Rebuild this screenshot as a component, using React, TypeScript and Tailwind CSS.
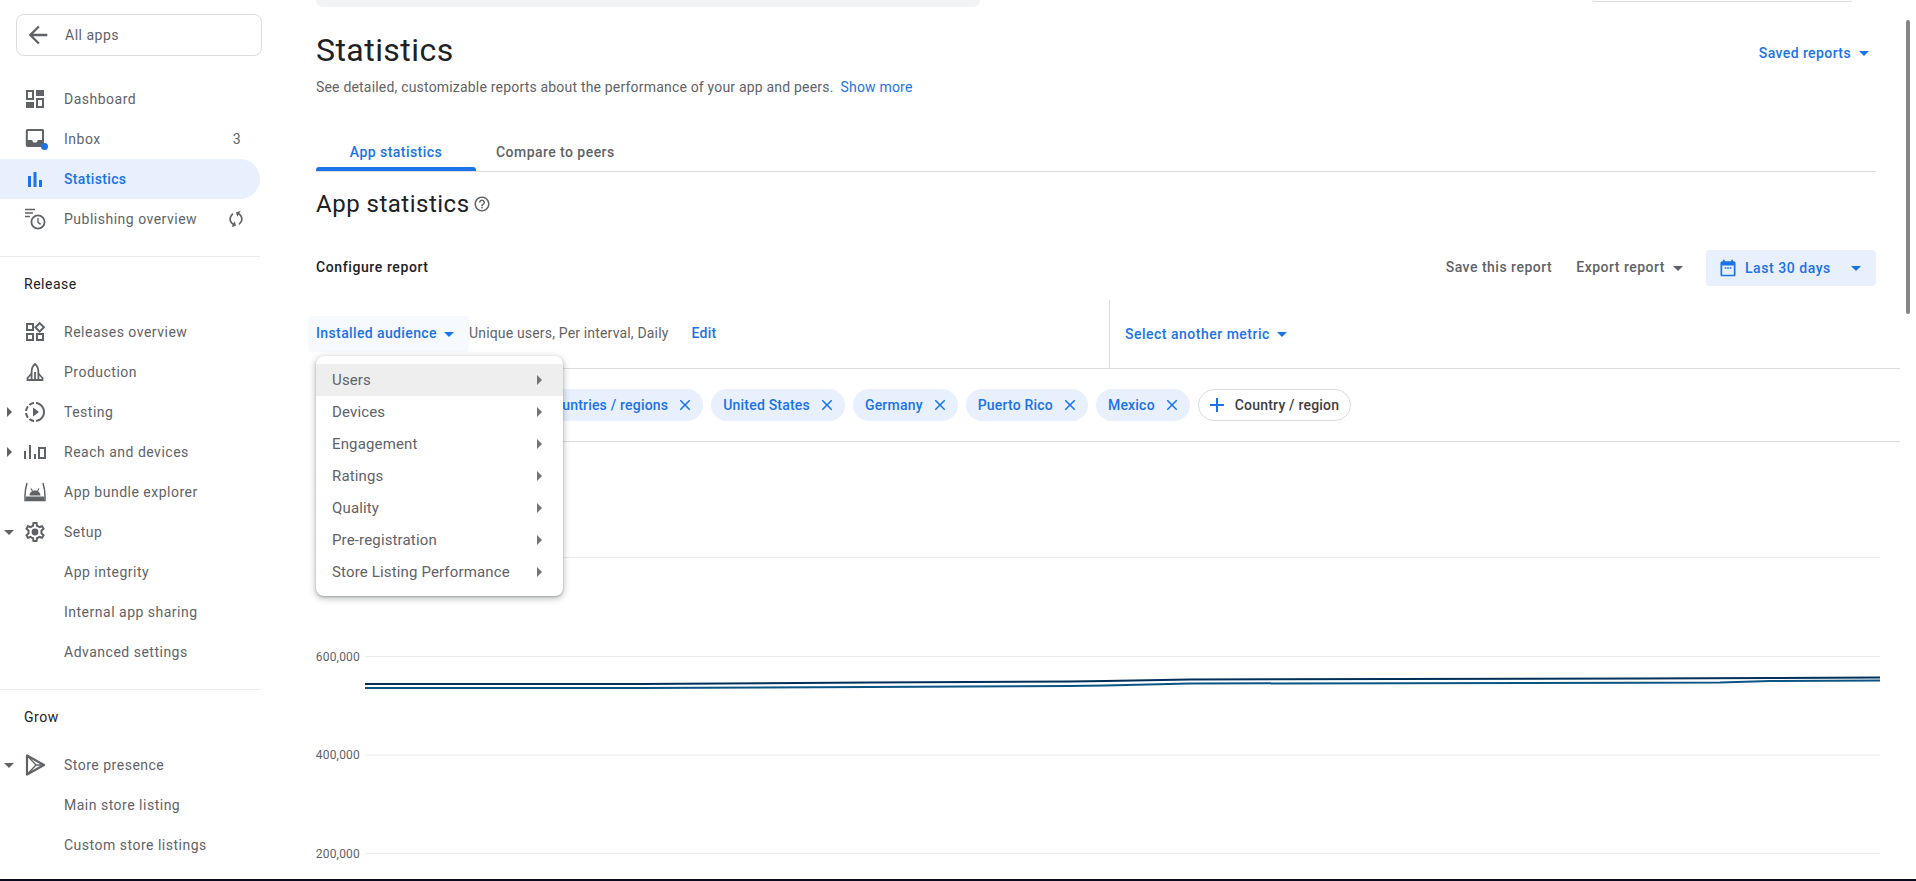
import React from "react";

const P = ({ d, className = "" }: { d: string; className?: string }) => (
  <svg viewBox="0 0 24 24" fill="currentColor" className={className}>
    <path d={d} />
  </svg>
);

const CaretDown = ({ className = "" }: { className?: string }) => (
  <svg viewBox="7 10 10 5" fill="currentColor" className={`w-[10px] h-[5px] shrink-0 ${className}`}>
    <path d="M7 10l5 5 5-5z" />
  </svg>
);
const CaretRight = ({ className = "" }: { className?: string }) => (
  <svg viewBox="0 0 5 10" fill="currentColor" className={`w-[5px] h-[10px] shrink-0 ${className}`}>
    <path d="M0 0l5 5-5 5z" />
  </svg>
);

const cog =
  "M19.43 12.98c.04-.32.07-.64.07-.98 0-.34-.03-.66-.07-.98l2.11-1.65c.19-.15.24-.42.12-.64l-2-3.46c-.09-.16-.26-.25-.44-.25-.06 0-.12.01-.17.03l-2.49 1c-.52-.4-1.08-.73-1.69-.98l-.38-2.65C14.46 2.18 14.25 2 14 2h-4c-.25 0-.46.18-.49.42l-.38 2.65c-.61.25-1.17.59-1.69.98l-2.49-1c-.06-.02-.12-.03-.18-.03-.17 0-.34.09-.43.25l-2 3.46c-.13.22-.07.49.12.64l2.11 1.65c-.04.32-.07.65-.07.98 0 .33.03.66.07.98l-2.11 1.65c-.19.15-.24.42-.12.64l2 3.46c.09.16.26.25.44.25.06 0 .12-.01.17-.03l2.49-1c.52.4 1.08.73 1.69.98l.38 2.65c.03.24.24.42.49.42h4c.25 0 .46-.18.49-.42l.38-2.65c.61-.25 1.17-.59 1.69-.98l2.49 1c.06.02.12.03.18.03.17 0 .34-.09.43-.25l2-3.46c.12-.22.07-.49-.12-.64l-2.11-1.65zm-1.98-1.71c.04.31.05.52.05.73 0 .21-.02.43-.05.73l-.14 1.13.89.7 1.08.84-.7 1.21-1.27-.51-1.04-.42-.9.68c-.43.32-.84.56-1.25.73l-1.06.43-.16 1.13-.2 1.35h-1.4l-.19-1.35-.16-1.13-1.06-.43c-.43-.18-.83-.41-1.23-.71l-.91-.7-1.06.43-1.27.51-.7-1.21 1.08-.84.89-.7-.14-1.13c-.03-.31-.05-.54-.05-.74s.02-.43.05-.73l.14-1.13-.89-.7-1.08-.84.7-1.21 1.27.51 1.04.42.9-.68c.43-.32.84-.56 1.25-.73l1.06-.43.16-1.13.2-1.35h1.39l.19 1.35.16 1.13 1.06.43c.43.18.83.41 1.23.71l.91.7 1.06-.43 1.27-.51.7 1.21-1.07.85-.89.7.14 1.13z";

const I = {
  dashboard: (
    <svg viewBox="0 0 20 20" fill="currentColor" className="w-5 h-5">
      <path fillRule="evenodd" d="M1 1h8v10H1zM3 3v6h4V3z" />
      <path d="M11 1h8v6h-8zM1 13h8v6H1z" />
      <path fillRule="evenodd" d="M11 9h8v10h-8zM13 11v6h4v-6z" />
    </svg>
  ),
  inbox: (
    <span className="relative w-5 h-5 block">
      <svg viewBox="0 0 20 20" fill="currentColor" className="w-5 h-5">
        <path fillRule="evenodd" d="M2.5 0h15A1.8 1.8 0 0 1 19 1.8v14.4a1.8 1.8 0 0 1-1.8 1.8H2.500A1.8 1.8 0 0 1 .8 16.2V1.8A1.8 1.8 0 0 1 2.500 0zM2.800 2v9h4.400c0 1.600 1.200 2.600 2.700 2.600s2.800-1 2.800-2.600h4.300V2z" />
      </svg>
      <span className="absolute -right-[3px] -bottom-[1px] w-[7px] h-[7px] rounded-full bg-[#1a73e8]" />
    </span>
  ),
  stats: <P className="w-[24px] h-[24px] text-[#1a73e8]" d="M5 9h3v11H5zM10.500 5h3v15h-3zM16 13h3v7h-3z" />,
  publishing: (
    <svg viewBox="0 0 22 22" className="w-[22px] h-[22px]" fill="none" stroke="currentColor">
      <path d="M1 1.500h10M1 5h8M1 8.500h5" strokeWidth="1.600" />
      <circle cx="14" cy="14" r="6.600" strokeWidth="1.800" />
      <path d="M14 10v4.400l2.600 2" strokeWidth="1.400" />
    </svg>
  ),
  releases: (
    <P
      className="w-6 h-6"
      d="M16.66 4.52l2.83 2.83-2.83 2.83-2.83-2.83 2.83-2.83M9 5v4H5V5h4m10 10v4h-4v-4h4M9 15v4H5v-4h4m7.66-13.31L11 7.34 16.66 13l5.66-5.66-5.66-5.65zM11 3H3v8h8V3zm10 10h-8v8h8v-8zm-10 0H3v8h8v-8z"
    />
  ),
  production: (
    <svg viewBox="0 0 18 18" className="w-[18px] h-[18px]" fill="none" stroke="currentColor" strokeWidth="1.800">
      <path d="M9 1C6.600 3 5.600 6 5.600 9v8h6.800V9c0-3-1-6-3.400-8z" />
      <path d="M5.600 10.500L1.500 15v2h4.100M12.400 10.500l4.100 4.500v2h-4.100M9 9v8" />
    </svg>
  ),
  testing: (
    <P
      className="w-6 h-6"
      d="M13.05 9.79L10 7.5v9l3.05-2.29L16 12zM11 4.07V2.05c-2.01.2-3.84 1-5.32 2.21L7.1 5.69c1.11-.86 2.44-1.44 3.9-1.62zM5.69 7.1L4.26 5.68C3.05 7.16 2.25 8.99 2.05 11h2.02c.18-1.46.76-2.79 1.62-3.9zM4.07 13H2.05c.2 2.01 1 3.84 2.21 5.32l1.43-1.43c-.86-1.1-1.44-2.43-1.62-3.89zm1.61 6.74C7.16 20.95 9 21.75 11 21.95v-2.02c-1.46-.18-2.79-.76-3.9-1.62l-1.42 1.43zM22 12c0 5.16-3.92 9.42-8.95 9.95v-2.02C16.97 19.41 20 16.05 20 12s-3.03-7.41-6.95-7.93V2.05C18.08 2.58 22 6.84 22 12z"
    />
  ),
  reach: (
    <svg viewBox="0 0 22 14" className="w-[22px] h-[14px]" fill="currentColor">
      <path d="M0 6h2v8H0zM5 0h2v14H5zM10 9h2v5h-2z" />
      <path fillRule="evenodd" d="M14 2h8v12h-8zM16 4v8h4V4z" />
    </svg>
  ),
  bundle: (
    <svg viewBox="0 0 22 20" className="w-[22px] h-[20px]" fill="none" stroke="currentColor">
      <path d="M3 1C1.800 5 1 10 1 14v4.500h20V14c0-4-.8-9-2-13" strokeWidth="1.500" />
      <path d="M5.500 13.500c0-2.800 2.300-5 5.500-5s5.500 2.200 5.500 5z" fill="currentColor" stroke="none" />
      <path d="M2 14.500h18v4.500H2z" fill="currentColor" stroke="none" />
      <path d="M7 6.500l1.500 2.500M15 6.500L13.500 9" strokeWidth="1.200" />
    </svg>
  ),
  setup: (
    <svg viewBox="0 0 24 24" className="w-6 h-6" fill="currentColor">
      <path d={cog} />
      <circle cx="12" cy="12" r="3.400" />
    </svg>
  ),
  store: (
    <svg viewBox="0 0 22 22" className="w-[22px] h-[22px]" fill="none" stroke="currentColor" strokeLinejoin="round">
      <path d="M3 1.500L20 11 3 20.500z" strokeWidth="2.200" />
      <path d="M3 1.500L12 11 3 20.500M12 11l8 0" strokeWidth="1.300" />
    </svg>
  ),
};

const sync =
  "M12 4V1L8 5l4 4V6c3.310 0 6 2.690 6 6 0 1.010-.25 1.970-.7 2.800l1.460 1.460C19.540 15.030 20 13.570 20 12c0-4.420-3.580-8-8-8zm0 14c-3.310 0-6-2.690-6-6 0-1.010.25-1.970.7-2.800L5.240 7.740C4.460 8.970 4 10.430 4 12c0 4.420 3.580 8 8 8v3l4-4-4-4v3z";

type Item = {
  label: string;
  icon?: React.ReactNode;
  caret?: "r" | "d";
  right?: React.ReactNode;
  active?: boolean;
};

const NavRow = ({ label, icon, caret, right, active }: Item) => (
  <div
    className={`h-10 flex items-center text-[14px] tracking-[0.5px] ${
      active ? "bg-[#e8f0fe] text-[#1a73e8] rounded-r-[20px] font-medium !tracking-[0.35px]" : "text-[#5f6368]"
    }`}
  >
    <span className="w-[24px] shrink-0 flex justify-center pr-[6px] text-[#5f6368]">
      {caret === "r" && <CaretRight />}
      {caret === "d" && <CaretDown />}
    </span>
    <span className="w-[40px] shrink-0 flex items-center pr-[16px] justify-center -translate-x-[1px]">{icon}</span>
    <span className="flex-1 whitespace-nowrap">{label}</span>
    {right && <span className="pr-[18px] flex items-center">{right}</span>}
  </div>
);

const Section = ({ title }: { title: string }) => (
  <div className="border-t border-[#e8eaed] h-[56px] pt-[17px] pl-[24px] text-[14px] leading-5 tracking-[0.5px] text-[#202124] mt-[17px]">
    {title}
  </div>
);

const Sidebar = () => (
  <aside className="w-[260px] shrink-0 pt-[14px]">
    <div className="ml-[16px] w-[246px] h-[42px] border border-[#dadce0] rounded-lg flex items-center pl-[7px] text-[14px] tracking-[0.5px] text-[#5f6368]">
      <P className="w-7 h-7 text-[#5f6368]" d="M20 11H7.830l5.590-5.590L12 4l-8 8 8 8 1.410-1.410L7.830 13H20v-2z" />
      <span className="ml-[13px]">All apps</span>
    </div>
    <div className="mt-[23px]">
      <NavRow label="Dashboard" icon={I.dashboard} />
      <NavRow label="Inbox" icon={I.inbox} right={<span className="pr-[1px]">3</span>} />
      <NavRow label="Statistics" icon={I.stats} active />
      <NavRow
        label="Publishing overview"
        icon={I.publishing}
        right={<P className="w-5 h-5 rotate-[30deg] text-[#5f6368] -ml-1 -mr-[4px]" d={sync} />}
      />
    </div>
    <Section title="Release" />
    <NavRow label="Releases overview" icon={I.releases} />
    <NavRow label="Production" icon={I.production} />
    <NavRow label="Testing" icon={I.testing} caret="r" />
    <NavRow label="Reach and devices" icon={I.reach} caret="r" />
    <NavRow label="App bundle explorer" icon={I.bundle} />
    <NavRow label="Setup" icon={I.setup} caret="d" />
    <NavRow label="App integrity" />
    <NavRow label="Internal app sharing" />
    <NavRow label="Advanced settings" />
    <Section title="Grow" />
    <NavRow label="Store presence" icon={I.store} caret="d" />
    <NavRow label="Main store listing" />
    <NavRow label="Custom store listings" />
  </aside>
);

const Close = () => (
  <P
    className="w-[18px] h-[18px] text-[#1a73e8] ml-[8px]"
    d="M19 6.410L17.590 5 12 10.590 6.410 5 5 6.410 10.590 12 5 17.590 6.410 19 12 13.410 17.590 19 19 17.590 13.410 12z"
  />
);

const Chip = ({ label, className = "" }: { label: string; className?: string }) => (
  <div
    className={`h-8 rounded-2xl bg-[#e8f0fe] text-[#1a73e8] flex items-center pl-[12px] pr-[9px] text-[14px] font-medium tracking-[0.2px] whitespace-nowrap ${className}`}
  >
    {label}
    <Close />
  </div>
);

const menuItems = ["Users", "Devices", "Engagement", "Ratings", "Quality", "Pre-registration", "Store Listing Performance"];

const Menu = () => (
  <div className="absolute left-[8px] top-[40px] w-[247px] h-[240px] bg-white rounded-lg py-2 z-10 font-normal shadow-[0_2px_6px_1px_rgba(60,64,67,0.3),0_1px_2px_rgba(60,64,67,0.3)]">
    {menuItems.map((m, i) => (
      <div
        key={m}
        className={`h-8 flex items-center justify-between pl-4 pr-[21px] text-[15px] tracking-[0.15px] text-[#5f6368] ${
          i === 0 ? "bg-[#eeeeee]" : ""
        }`}
      >
        <span className="whitespace-nowrap">{m}</span>
        <CaretRight className="text-[#757575]" />
      </div>
    ))}
  </div>
);

const Chart = () => {
  const top =
    "365,684 640,684 870,682.500 1070,681.500 1105,681 1190,679.500 1640,678.500 1770,678 1880,677.500";
  const bottom =
    "365,688 640,688 870,687 1070,686 1105,685.500 1190,683.500 1640,682.800 1720,682.500 1770,681 1880,680.500";
  const grid = [
    { y: 557.5, t: "" },
    { y: 656.5, t: "600,000" },
    { y: 755, t: "400,000" },
    { y: 853.5, t: "200,000" },
  ];
  return (
    <svg width="1600" height="437" viewBox="300 442 1600 437" className="block -ml-[16px]">
      {grid.map((g) => (
        <g key={g.y}>
          <line x1="365" x2="1880" y1={g.y} y2={g.y} stroke="#e8eaed" strokeWidth="1" />
          {g.t && (
            <text
              x="360"
              y={g.y + 4}
              textAnchor="end"
              fontSize="12"
              fill="#5f6368"
              fontFamily="Roboto, sans-serif"
              letterSpacing="0.2"
            >
              {g.t}
            </text>
          )}
        </g>
      ))}
      <polyline points={top} fill="none" stroke="#00305a" strokeWidth="2" />
      <polyline points={bottom} fill="none" stroke="#0b5585" strokeWidth="2" />
    </svg>
  );
};

const Main = () => (
  <main className="flex-1 min-w-0 relative pl-[56px]">
    <div className="h-[7px] flex justify-between pr-[64px]">
      <div className="w-[664px] h-[7px] bg-[#f1f3f4] rounded-b-lg" />
      <div className="w-[260px] h-[2px] border-b border-[#dadce0] rounded-b-lg" />
    </div>

    <div className="mt-[23px] flex justify-between w-[1553px] h-10">
      <h1 className="text-[32px] leading-10 text-[#202124] tracking-[0.45px]">Statistics</h1>
      <div className="flex items-center gap-[8px] mt-[13px] h-5 text-[14px] tracking-[0.4px] text-[#1a73e8] font-medium">
        Saved reports <CaretDown />
      </div>
    </div>
    <p className="mt-[7px] h-5 text-[14px] leading-5 text-[#5f6368] tracking-[0.19px]">
      See detailed, customizable reports about the performance of your app and peers.
      <span className="text-[#1a73e8] ml-[7px]">Show more</span>
    </p>

    <div className="mt-[36px] w-[1560px] h-[39px] border-b border-[#dadce0] flex text-[14px] tracking-[0.45px] font-medium">
      <div className="w-[160px] h-[38px] relative flex items-center justify-center text-[#1a73e8]">
        App statistics
        <span className="absolute left-0 right-0 bottom-0 h-[4px] bg-[#1a73e8] rounded-t-[3px]" />
      </div>
      <div className="ml-[20px] h-[38px] flex items-center text-[#5f6368]">Compare to peers</div>
    </div>

    <div className="mt-[16px] h-8 flex items-center gap-[3px]">
      <h2 className="text-[24px] leading-8 text-[#202124] tracking-[0.5px]">App statistics</h2>
      <P
        className="w-[18px] h-[18px] text-[#5f6368]"
        d="M11 18h2v-2h-2v2zm1-16C6.480 2 2 6.480 2 12s4.480 10 10 10 10-4.480 10-10S17.520 2 12 2zm0 18c-4.410 0-8-3.590-8-8s3.590-8 8-8 8 3.590 8 8-3.590 8-8 8zm0-14c-2.210 0-4 1.790-4 4h2c0-1.100.9-2 2-2s2 .9 2 2c0 2-3 1.750-3 5h2c0-2.250 3-2.500 3-5 0-2.210-1.790-4-4-4z"
      />
    </div>

    <div className="mt-[30px] h-9 w-[1560px] flex items-center">
      <div className="text-[14px] font-medium text-[#202124] tracking-[0.6px] -mt-[2px]">Configure report</div>
      <div className="ml-auto flex items-center text-[14px] tracking-[0.5px] text-[#5f6368]">
        <span className="-mt-[2px] font-medium">Save this report</span>
        <span className="ml-[24px] -mt-[2px] font-medium">Export report</span>
        <CaretDown className="ml-[8px]" />
        <div className="ml-[23px] w-[170px] h-9 rounded bg-[#e8f0fe] text-[#1a73e8] font-medium flex items-center pl-[12px] pr-[15px] tracking-[0.55px]">
          <P
            className="w-[20px] h-[20px]"
            d="M19 4h-1V2h-2v2H8V2H6v2H5c-1.100 0-2 .9-2 2v14c0 1.100.9 2 2 2h14c1.100 0 2-.9 2-2V6c0-1.100-.9-2-2-2zm0 16H5V9h14v11zM8 11h2v2H8zm3 0h2v2h-2zm3 0h2v2h-2z"
          />
          <span className="ml-[7px]">Last 30 days</span>
          <CaretDown className="ml-auto" />
        </div>
      </div>
    </div>

    <div className="mt-[14px] w-[1584px] h-[69px] border-b border-[#dadce0] flex">
      <div className="w-[793px] h-[68px] flex items-center text-[14px]">
        <div className="relative -ml-[8px] w-[161px] h-9 rounded bg-[#f6f9fe] text-[#1a73e8] font-medium flex items-center pl-[8px] shrink-0 tracking-[0.38px]">
          <span className="-mt-[1px]">Installed audience</span>
          <CaretDown className="ml-[7px]" />
          <Menu />
        </div>
        <span className="text-[#5f6368] tracking-[0.17px] -mt-[1px]">Unique users, Per interval, Daily</span>
        <span className="ml-[23px] text-[#1a73e8] font-medium tracking-[0.25px] -mt-[1px]">Edit</span>
      </div>
      <div className="h-[68px] border-l border-[#dadce0] pl-[15px] flex items-center gap-[7px] text-[14px] tracking-[0.5px] font-medium text-[#1a73e8]">
        Select another metric <CaretDown />
      </div>
    </div>

    <div className="w-[1584px] h-[73px] border-b border-[#dadce0] flex items-center gap-2">
      <Chip label="Top 5 countries / regions" className="ml-[179px]" />
      <Chip label="United States" />
      <Chip label="Germany" />
      <Chip label="Puerto Rico" />
      <Chip label="Mexico" />
      <div className="h-8 rounded-2xl border border-[#dadce0] flex items-center pl-[6px] pr-[11px] text-[14px] font-medium tracking-[0.2px] text-[#3c4043] whitespace-nowrap">
        <P className="w-6 h-6 text-[#1a73e8] mr-[6px]" d="M19 13h-6v6h-2v-6H5v-2h6V5h2v6h6v2z" />
        Country / region
      </div>
    </div>

    <Chart />

    <div className="absolute right-[6px] top-[20px] w-[4px] h-[294px] rounded-sm bg-[#80868b]" />
  </main>
);

export default function App() {
  return (
    <div className="h-[881px] overflow-hidden bg-white flex flex-col font-['Roboto',sans-serif]">
      <div className="h-[879px] flex overflow-hidden">
        <Sidebar />
        <Main />
      </div>
      <div className="h-[2px] bg-[#0a0a1e]" />
    </div>
  );
}
